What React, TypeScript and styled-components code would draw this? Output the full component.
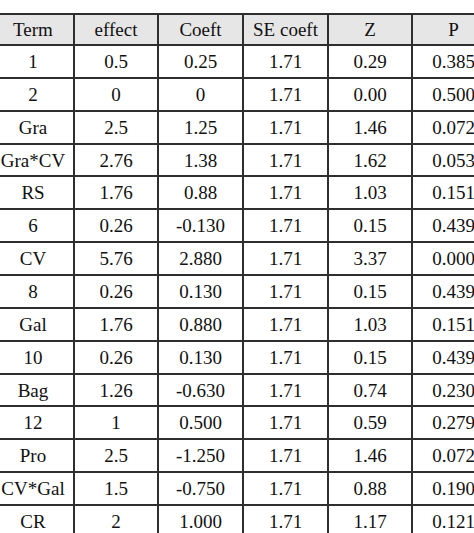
import React from 'react';
import styled, { createGlobalStyle } from 'styled-components';

const GlobalStyle = createGlobalStyle`
  html, body {
    margin: 0;
    padding: 0;
    background: #ffffff;
    overflow: hidden;
  }
`;

const Page = styled.div`
  width: 474px;
  height: 533px;
  overflow: hidden;
  padding-top: 13px;
  box-sizing: border-box;
`;

const Table = styled.table`
  margin-left: -9px;
  border-collapse: collapse;
  table-layout: fixed;
  width: 503px;
  font-family: "Liberation Serif", "Times New Roman", serif;
  font-size: 19px;
  color: #111111;
`;

const HeadRow = styled.tr`
  height: 31px;
  background: #e6e6e6;
`;

const BodyRow = styled.tr`
  height: 32.86px;
`;

const Cell = styled.td<{ $w?: number }>`
  border: 2px solid #2e2e2e;
  text-align: center;
  vertical-align: middle;
  padding: 0;
  white-space: nowrap;
  overflow: hidden;
  width: ${(p) => (p.$w ? `${p.$w}px` : 'auto')};
  line-height: 1;
`;

const HeadCell = styled(Cell).attrs({ as: 'th' })`
  font-weight: normal;
`;

const columns = ['Term', 'effect', 'Coeft', 'SE coeft', 'Z', 'P'];
// cell widths exclude the shared 2px borders
const widths = [80, 82, 83, 83, 82, 81];

const rows: string[][] = [
  ['1', '0.5', '0.25', '1.71', '0.29', '0.385'],
  ['2', '0', '0', '1.71', '0.00', '0.500'],
  ['Gra', '2.5', '1.25', '1.71', '1.46', '0.072'],
  ['Gra*CV', '2.76', '1.38', '1.71', '1.62', '0.053'],
  ['RS', '1.76', '0.88', '1.71', '1.03', '0.151'],
  ['6', '0.26', '-0.130', '1.71', '0.15', '0.439'],
  ['CV', '5.76', '2.880', '1.71', '3.37', '0.000'],
  ['8', '0.26', '0.130', '1.71', '0.15', '0.439'],
  ['Gal', '1.76', '0.880', '1.71', '1.03', '0.151'],
  ['10', '0.26', '0.130', '1.71', '0.15', '0.439'],
  ['Bag', '1.26', '-0.630', '1.71', '0.74', '0.230'],
  ['12', '1', '0.500', '1.71', '0.59', '0.279'],
  ['Pro', '2.5', '-1.250', '1.71', '1.46', '0.072'],
  ['CV*Gal', '1.5', '-0.750', '1.71', '0.88', '0.190'],
  ['CR', '2', '1.000', '1.71', '1.17', '0.121'],
];

export default function App() {
  return (
    <>
      <GlobalStyle />
      <Page>
        <Table>
          <thead>
            <HeadRow>
              {columns.map((c, i) => (
                <HeadCell key={c} $w={widths[i]}>
                  {c}
                </HeadCell>
              ))}
            </HeadRow>
          </thead>
          <tbody>
            {rows.map((r) => (
              <BodyRow key={r[0]}>
                {r.map((v, i) => (
                  <Cell key={i}>{v}</Cell>
                ))}
              </BodyRow>
            ))}
          </tbody>
        </Table>
      </Page>
    </>
  );
}
